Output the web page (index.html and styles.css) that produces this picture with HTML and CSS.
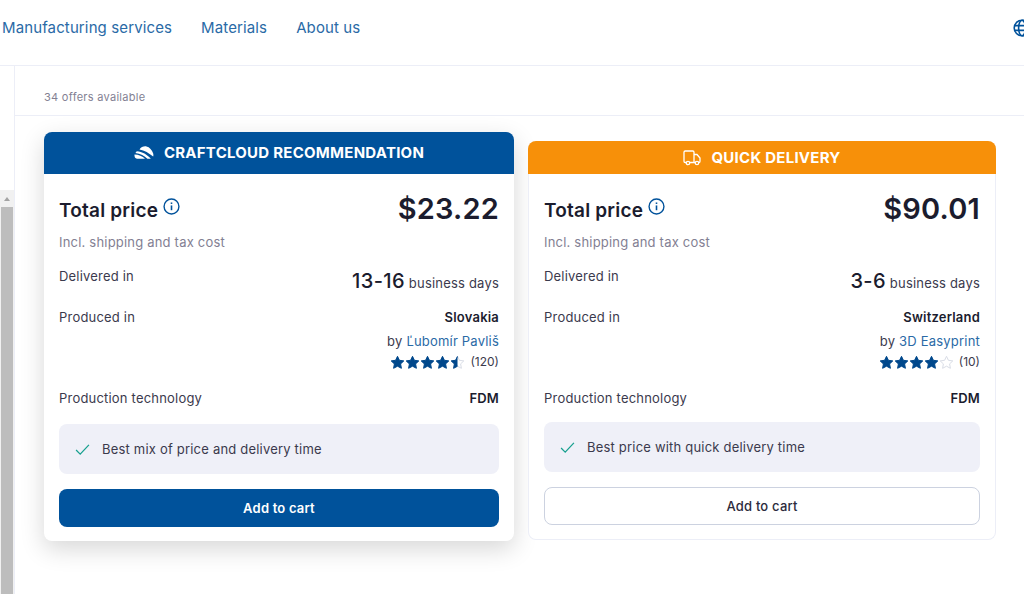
FILE: index.html
```html
<!DOCTYPE html>
<html lang="en">
<head>
    <meta charset="UTF-8">
    <meta name="viewport" content="width=device-width, initial-scale=1.0">
    <title>Offers - Craftcloud</title>
    <link rel="stylesheet" href="styles.css">
</head>
<body>
    <nav class="topnav">
        <a href="#">Manufacturing services</a>
        <a href="#">Materials</a>
        <a href="#">About us</a>
        <svg class="globe" viewBox="0 0 18 18" fill="none" stroke="#00529b" stroke-width="1.6">
            <circle cx="9" cy="9" r="7.8"/>
            <ellipse cx="9" cy="9" rx="3.4" ry="7.8"/>
            <path d="M1.4 6.6h15.2M1.4 11.4h15.2"/>
        </svg>
    </nav>
    <div class="page">
        <aside class="sidebar">
            <div class="scrollbar">
                <div class="scroll-arrow"></div>
                <div class="scroll-thumb"></div>
            </div>
        </aside>
        <main class="content">
            <div class="offers-bar">34 offers available</div>
            <div class="cards">
                <section class="card card-featured">
                    <div class="card-head head-blue">
                        <svg class="head-logo" viewBox="0 0 20 14" fill="#fff">
                            <path d="M5.500 3.400C7 1 10 0 12.500.5c3 .6 5.500 3.500 6.700 7 .3 1 .3 2 0 3C15 7 10.500 4.400 5.500 3.400z"/>
                            <path d="M2.800 5.200C8 5.600 13.500 8.600 16.800 12.800h-3.400C10.500 9.800 6.500 7.600 1.400 7z"/>
                            <path d="M.5 8.600c4 0 8 1.600 10.500 4.200H3C1.200 12.800.2 10.800.5 8.600z"/>
                        </svg>
                        CRAFTCLOUD RECOMMENDATION
                    </div>
                    <div class="card-body">
                        <div class="price-row">
                            <div class="price-label">Total price
                                <svg class="info" viewBox="0 0 16 16" fill="none" stroke="#00529b" stroke-width="1.3">
                                    <circle cx="8" cy="8" r="7"/>
                                    <path d="M8 7v4.500" stroke-width="1.500"/>
                                    <path d="M8 4.200v1.400" stroke-width="1.500"/>
                                </svg>
                            </div>
                            <div class="price">$23.22</div>
                        </div>
                        <p class="price-note">Incl. shipping and tax cost</p>
                        <div class="row row-delivery">
                            <span>Delivered in</span>
                            <span class="days"><b>13-16</b> business days</span>
                        </div>
                        <div class="row row-produced">
                            <span>Produced in</span>
                            <div class="producer">
                                <strong>Slovakia</strong>
                                <div class="by">by <a href="#">Ľubomír Pavliš</a></div>
                                <div class="rating">
                                    <svg class="stars" viewBox="0 0 75 15" width="75" height="15">
                                        <defs>
                                            <path id="star" d="M7.500 1.300l1.900 4 4.400.6-3.200 3 .8 4.400-3.900-2.100-3.900 2.100.8-4.400-3.200-3 4.400-.6z"/>
                                            <clipPath id="half"><rect x="60" y="0" width="7.500" height="15"/></clipPath>
                                        </defs>
                                        <g fill="#00488c" stroke="#00488c" stroke-width="1" stroke-linejoin="round">
                                            <use href="#star"/>
                                            <use href="#star" x="15"/>
                                            <use href="#star" x="30"/>
                                            <use href="#star" x="45"/>
                                        </g>
                                        <use href="#star" x="60" fill="none" stroke="#d9dde6"/>
                                        <g clip-path="url(#half)"><use href="#star" x="60" fill="#00488c" stroke="#00488c"/></g>
                                    </svg>
                                    <span>(120)</span>
                                </div>
                            </div>
                        </div>
                        <div class="row row-tech">
                            <span>Production technology</span>
                            <strong>FDM</strong>
                        </div>
                        <div class="note">
                            <svg class="check" viewBox="0 0 16 12" fill="none" stroke="#17a08f" stroke-width="1.400"><path d="M1 6.500l4.500 4.500L15 1"/></svg>
                            Best mix of price and delivery time
                        </div>
                        <a class="btn btn-primary" href="#">Add to cart</a>
                    </div>
                </section>
                <section class="card card-plain">
                    <div class="card-head head-orange">
                        <svg class="head-truck" viewBox="0 0 18 16" fill="none" stroke="#fff" stroke-width="1.300">
                            <path d="M3.500 12.500H2.200A1.200 1.200 0 0 1 1 11.300V2.200A1.200 1.200 0 0 1 2.200 1h7.600a1.200 1.200 0 0 1 1.200 1.200v10.300H6.500"/>
                            <path d="M11 4.500h3l3 3.500v3.300a1.200 1.200 0 0 1-1.200 1.200h-.3M12.500 12.500H11"/>
                            <circle cx="5" cy="13" r="1.700"/>
                            <circle cx="14" cy="13" r="1.700"/>
                        </svg>
                        QUICK DELIVERY
                    </div>
                    <div class="card-body">
                        <div class="price-row">
                            <div class="price-label">Total price
                                <svg class="info" viewBox="0 0 16 16" fill="none" stroke="#00529b" stroke-width="1.3">
                                    <circle cx="8" cy="8" r="7"/>
                                    <path d="M8 7v4.500" stroke-width="1.500"/>
                                    <path d="M8 4.200v1.400" stroke-width="1.500"/>
                                </svg>
                            </div>
                            <div class="price">$90.01</div>
                        </div>
                        <p class="price-note">Incl. shipping and tax cost</p>
                        <div class="row row-delivery">
                            <span>Delivered in</span>
                            <span class="days"><b>3-6</b> business days</span>
                        </div>
                        <div class="row row-produced">
                            <span>Produced in</span>
                            <div class="producer">
                                <strong>Switzerland</strong>
                                <div class="by">by <a href="#">3D Easyprint</a></div>
                                <div class="rating">
                                    <svg class="stars" viewBox="0 0 75 15" width="75" height="15">
                                        <g fill="#00488c" stroke="#00488c" stroke-width="1" stroke-linejoin="round">
                                            <use href="#star"/>
                                            <use href="#star" x="15"/>
                                            <use href="#star" x="30"/>
                                            <use href="#star" x="45"/>
                                        </g>
                                        <use href="#star" x="60" fill="none" stroke="#d9dde6"/>
                                    </svg>
                                    <span>(10)</span>
                                </div>
                            </div>
                        </div>
                        <div class="row row-tech">
                            <span>Production technology</span>
                            <strong>FDM</strong>
                        </div>
                        <div class="note">
                            <svg class="check" viewBox="0 0 16 12" fill="none" stroke="#17a08f" stroke-width="1.400"><path d="M1 6.500l4.500 4.500L15 1"/></svg>
                            Best price with quick delivery time
                        </div>
                        <a class="btn btn-outline" href="#">Add to cart</a>
                    </div>
                </section>
            </div>
        </main>
    </div>
</body>
</html>
```

FILE: styles.css
```css
* {
    margin: 0;
    padding: 0;
    box-sizing: border-box;
}
html, body {
    height: 100%;
    overflow: hidden;
}
body {
    background-color: #fff;
    color: #3b3a4d;
    font-family: Inter, "Liberation Sans", sans-serif;
    font-size: 13px;
    letter-spacing: 0.2px;
}
a {
    text-decoration: none;
}
.topnav {
    display: flex;
    align-items: center;
    gap: 29px;
    height: 66px;
    padding: 0 0 10px 2px;
    border-bottom: 1px solid #eceef7;
    font-size: 15px;
    letter-spacing: 0.12px;
}
.topnav a {
    color: #2a6aa6;
}
.globe {
    width: 18px;
    height: 18px;
    margin-left: auto;
    margin-right: -7px;
    flex-shrink: 0;
}
.page {
    display: flex;
    height: 528px;
}
.sidebar {
    width: 15px;
    border-right: 1px solid #eceef7;
    padding-top: 124px;
}
.scrollbar {
    width: 14px;
    height: 404px;
    background-color: #f1f1f1;
}
.scroll-arrow {
    height: 17px;
    position: relative;
}
.scroll-arrow::after {
    content: "";
    position: absolute;
    left: 4px;
    top: 7px;
    border-left: 3px solid transparent;
    border-right: 3px solid transparent;
    border-bottom: 4px solid #a3a3a3;
}
.scroll-thumb {
    width: 12px;
    height: 387px;
    margin-left: 1px;
    background-color: #bdbdbd;
}
.content {
    flex: 1;
    min-width: 0;
}
.offers-bar {
    height: 50px;
    padding: 24px 0 0 29px;
    border-bottom: 1px solid #eceef7;
    font-size: 11px;
    line-height: 14px;
    letter-spacing: 0.28px;
    color: #837f93;
}
.cards {
    display: flex;
    align-items: flex-start;
    gap: 14px;
    padding: 16px 0 0 29px;
}
.card {
    border-radius: 8px;
    background-color: #fff;
}
.card-featured {
    width: 470px;
    height: 409px;
    box-shadow: 0 8px 24px rgba(0, 0, 0, 0.16);
}
.card-plain {
    width: 468px;
    height: 399px;
    margin-top: 9px;
    border: 1px solid #eceef7;
    border-top: none;
}
.card-head {
    display: flex;
    align-items: center;
    justify-content: center;
    gap: 10px;
    border-radius: 8px 8px 0 0;
    color: #fff;
    font-size: 15px;
    font-weight: 700;
    letter-spacing: 0.25px;
}
.head-blue {
    height: 42px;
    padding-bottom: 1px;
    background-color: #00529b;
}
.head-orange {
    height: 33px;
    margin: 0 -1px;
    background-color: #f79009;
}
.head-logo {
    width: 20px;
    height: 14px;
}
.head-truck {
    width: 18px;
    height: 16px;
}
.card-body {
    padding: 18px 15px 0;
}
.price-row {
    display: flex;
    justify-content: space-between;
    align-items: flex-start;
    height: 40px;
}
.price-label {
    display: flex;
    align-items: flex-start;
    gap: 5px;
    padding-top: 7px;
    font-size: 19px;
    font-weight: 600;
    line-height: 23px;
    color: #1b1c2e;
}
.info {
    width: 17px;
    height: 17px;
    margin-top: -1px;
}
.price {
    margin-top: -1px;
    font-size: 29px;
    font-weight: 600;
    line-height: 36px;
    color: #1b1c2e;
}
.price-note {
    margin-top: 2px;
    line-height: 16px;
    color: #837f93;
}
.row {
    display: flex;
    justify-content: space-between;
    align-items: flex-start;
    line-height: 16px;
}
.row strong {
    font-weight: 600;
    color: #1b1c2e;
}
.row-delivery {
    height: 41px;
    margin-top: 18px;
}
.days {
    margin-top: -3px;
    line-height: 22px;
    padding-top: 5px;
}
.days b {
    font-size: 20px;
    font-weight: 500;
    letter-spacing: 0.4px;
    color: #1b1c2e;
}
.row-produced {
    height: 81px;
}
.producer {
    text-align: right;
}
.by {
    margin-top: 8px;
}
.by a {
    color: #2a6aa6;
}
.rating {
    display: flex;
    align-items: center;
    justify-content: flex-end;
    gap: 5px;
    height: 16px;
    margin-top: 5px;
    font-size: 12px;
    letter-spacing: 0;
}
.row-tech {
    height: 34px;
}
.card-plain .row-tech {
    height: 32px;
}
.note {
    display: flex;
    align-items: center;
    gap: 12px;
    height: 50px;
    padding-left: 16px;
    border-radius: 8px;
    background-color: #eff0f8;
}
.check {
    width: 15px;
    height: 11px;
}
.btn {
    display: flex;
    align-items: center;
    justify-content: center;
    height: 38px;
    margin-top: 15px;
    border-radius: 8px;
    font-weight: 600;
}
.btn-primary {
    background-color: #00529b;
    color: #fff;
}
.btn-outline {
    border: 1px solid #ccd2e0;
    color: #2c2b3d;
    font-weight: 500;
}
```
